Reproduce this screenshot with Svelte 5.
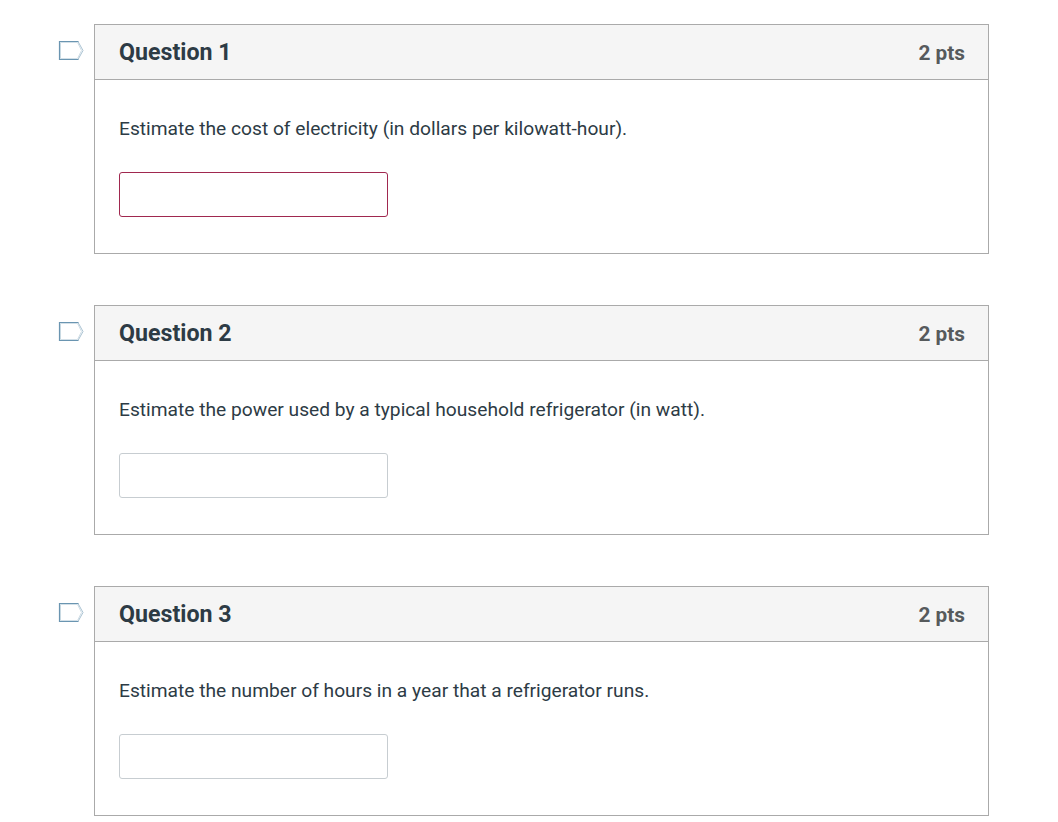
<script>
  const questions = [
    { id: 1, text: 'Estimate the cost of electricity (in dollars per kilowatt-hour).', invalid: true },
    { id: 2, text: 'Estimate the power used by a typical household refrigerator (in watt).', invalid: false },
    { id: 3, text: 'Estimate the number of hours in a year that a refrigerator runs.', invalid: false }
  ];
</script>

<main>
  {#each questions as q}
    <section class="row">
      <div class="flag">
        <svg width="26" height="21" viewBox="0 0 26 21" fill="none" aria-hidden="true">
          <path d="M2.5 2.5H19.5L23.5 10.5L19.5 18.5H2.5Z" fill="#fff" stroke="#d3e0e8" stroke-width="1" />
          <path d="M20 1.5L25 10.5L20 19.5" stroke="#a9c2d2" stroke-width="1" />
          <path d="M20.5 1.5H1.5V19.5H20.5" stroke="#6a95b1" stroke-width="1.2" />
        </svg>
      </div>
      <article class="card">
        <header>
          <h2>Question {q.id}</h2>
          <span class="pts">2 pts</span>
        </header>
        <div class="body">
          <p>{q.text}</p>
          <input type="text" class:invalid={q.invalid} aria-label="Answer" />
        </div>
      </article>
    </section>
  {/each}
</main>

<style>
  :global(body) {
    background: #fff;
  }
  main {
    display: flex;
    flex-direction: column;
    gap: 51px;
    padding: 24px 69px 0 58px;
    font-family: Roboto, "Liberation Sans", sans-serif;
    color: #2d3b45;
  }
  .row {
    display: flex;
    align-items: flex-start;
  }
  .flag {
    width: 36px;
    flex: none;
    padding-top: 16px;
  }
  .flag svg {
    display: block;
  }
  .card {
    flex: 1;
    height: 230px;
    box-sizing: border-box;
    border: 1px solid #aaa;
  }
  header {
    display: flex;
    justify-content: space-between;
    align-items: center;
    height: 54px;
    padding: 0 23px 0 24px;
    background: #f5f5f5;
    border-bottom: 1px solid #aaa;
  }
  h2 {
    margin: 0;
    font-size: 23.2px;
    font-weight: 700;
  }
  .pts {
    padding-top: 2px;
    font-size: 20.8px;
    font-weight: 700;
    color: #565a5c;
  }
  .body {
    padding: 36px 24px 0;
  }
  p {
    margin: 0;
    font-size: 19.2px;
    line-height: 26px;
  }
  input {
    display: block;
    box-sizing: border-box;
    width: 269px;
    height: 45px;
    margin-top: 30px;
    padding: 0 10px;
    background: #fff;
    border: 1px solid #c7cdd1;
    border-radius: 3px;
    outline: none;
  }
  input.invalid {
    border-color: #a0284f;
  }
</style>
